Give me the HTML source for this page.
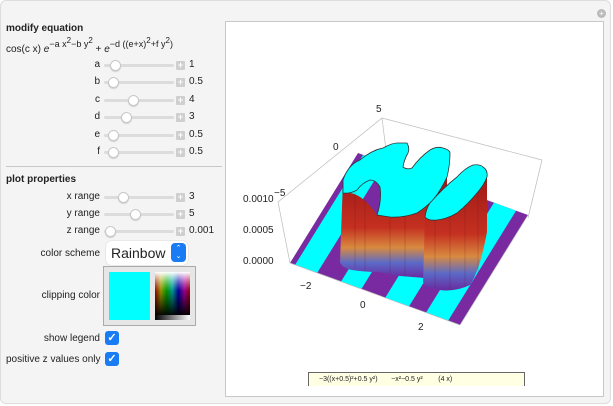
<!DOCTYPE html>
<html><head><meta charset="utf-8"><style>
*{margin:0;padding:0;box-sizing:border-box}
body{width:613px;height:406px;background:#fff;font-family:"Liberation Sans",sans-serif;font-size:10px;color:#222;position:relative;overflow:hidden}
.frame{position:absolute;left:0;top:0;width:611px;height:404px;background:#f4f4f4;border:1px solid #ddd;border-radius:6px}
.plot{position:absolute;left:225px;top:21px;width:379px;height:376px;background:#fff;border:1px solid #c8c8c8}
.t{position:absolute;white-space:nowrap}
.b{font-weight:bold}
.lab{position:absolute;text-align:right;width:100px;left:0;white-space:nowrap}
.track{position:absolute;left:104px;width:70px;height:3px;background:#dcdcdc;border-radius:2px}
.knob{position:absolute;width:11px;height:11px;border-radius:50%;background:#fff;border:1px solid #c8c8c8;box-shadow:0 1px 1px rgba(0,0,0,.15)}
.plus{position:absolute;left:176px;width:9px;height:9px;background:#cfcfcf;border-radius:1px;color:#fff;font-size:9px;line-height:9px;text-align:center;font-weight:bold}
.val{position:absolute;left:189px}
.cb{position:absolute;left:105px;width:14px;height:14px;background:#1a7cf5;border-radius:3px;color:#fff;font-size:11px;line-height:14px;text-align:center;font-weight:bold}
sup{font-size:9px;vertical-align:5px;line-height:0}
sup sup{font-size:8px;vertical-align:4px}
</style></head><body>
<div class="frame"></div>
<div style="position:absolute;left:597px;top:9px;width:9px;height:9px;border-radius:50%;background:#bbb;color:#fff;font-size:8px;line-height:9px;text-align:center">+</div>
<div class="plot"></div>

<div class="t b" style="left:6px;top:23px">modify equation</div>
<div class="t" style="left:6px;top:41px;font-size:10px">cos(c x) <i>e</i><sup>−a x<sup>2</sup>−b y<sup>2</sup></sup> + <i>e</i><sup>−d ((e+x)<sup>2</sup>+f y<sup>2</sup>)</sup></div>

<div class="lab" style="top:59px">a</div><div class="track" style="top:64px"></div><div class="knob" style="left:110px;top:60px"></div><div class="plus" style="top:61px">+</div><div class="val" style="top:59px">1</div>
<div class="lab" style="top:76px">b</div><div class="track" style="top:81px"></div><div class="knob" style="left:108px;top:77px"></div><div class="plus" style="top:78px">+</div><div class="val" style="top:76px">0.5</div>
<div class="lab" style="top:94px">c</div><div class="track" style="top:99px"></div><div class="knob" style="left:128px;top:95px"></div><div class="plus" style="top:96px">+</div><div class="val" style="top:94px">4</div>
<div class="lab" style="top:111px">d</div><div class="track" style="top:116px"></div><div class="knob" style="left:121px;top:112px"></div><div class="plus" style="top:113px">+</div><div class="val" style="top:111px">3</div>
<div class="lab" style="top:129px">e</div><div class="track" style="top:134px"></div><div class="knob" style="left:108px;top:130px"></div><div class="plus" style="top:131px">+</div><div class="val" style="top:129px">0.5</div>
<div class="lab" style="top:146px">f</div><div class="track" style="top:151px"></div><div class="knob" style="left:108px;top:147px"></div><div class="plus" style="top:148px">+</div><div class="val" style="top:146px">0.5</div>

<div style="position:absolute;left:6px;top:166px;width:216px;height:1px;background:#c8c8c8"></div>
<div class="t b" style="left:6px;top:174px">plot properties</div>

<div class="lab" style="top:191px">x range</div><div class="track" style="top:196px"></div><div class="knob" style="left:118px;top:192px"></div><div class="plus" style="top:193px">+</div><div class="val" style="top:191px">3</div>
<div class="lab" style="top:208px">y range</div><div class="track" style="top:213px"></div><div class="knob" style="left:130px;top:209px"></div><div class="plus" style="top:210px">+</div><div class="val" style="top:208px">5</div>
<div class="lab" style="top:225px">z range</div><div class="track" style="top:230px"></div><div class="knob" style="left:105px;top:226px"></div><div class="plus" style="top:227px">+</div><div class="val" style="top:225px">0.001</div>

<div class="lab" style="top:248px">color scheme</div>
<div style="position:absolute;left:106px;top:241px;width:82px;height:24px;background:#fff;border-radius:5px;box-shadow:0 0 1px rgba(0,0,0,.3)"></div>
<div class="t" style="left:111px;top:245px;font-size:14px">Rainbow</div>
<div style="position:absolute;left:171px;top:243px;width:15px;height:19px;background:#1a7cf5;border-radius:4px;color:#fff;font-size:7px;line-height:8px;text-align:center;padding-top:2px">⌃<br>⌄</div>

<div class="lab" style="top:290px">clipping color</div>
<div style="position:absolute;left:103px;top:266px;width:93px;height:60px;background:#e6e6e6;border:1px solid #aaa"></div>
<div style="position:absolute;left:109px;top:272px;width:41px;height:48px;background:#00ffff"></div>
<div style="position:absolute;left:155px;top:272px;width:35px;height:48px;background:linear-gradient(to bottom,rgba(0,0,0,0) 0%,rgba(0,0,0,1) 92%),linear-gradient(to bottom,rgba(255,255,255,1),rgba(255,255,255,0) 40%),linear-gradient(to right,#f00,#ff0,#0f0,#0ff,#00f,#f0f,#f00)"></div>
<div style="position:absolute;left:155px;top:315px;width:35px;height:5px;background:linear-gradient(to right,#000,#fff)"></div>

<div class="lab" style="top:333px">show legend</div><div class="cb" style="top:331px">✓</div>
<div class="t" style="left:6px;top:354px">positive z values only</div><div class="cb" style="top:352px">✓</div>

<svg style="position:absolute;left:0;top:0" width="613" height="406" font-family="Liberation Sans" font-size="10" fill="#222">
<defs>
<linearGradient id="g1" x1="0" y1="0" x2="0" y2="1"><stop offset="0" stop-color="#a01818"/><stop offset="0.5" stop-color="#c43020"/><stop offset="0.7" stop-color="#d88a40"/><stop offset="0.85" stop-color="#5a6ac8"/><stop offset="1" stop-color="#6a2aa0"/></linearGradient>
</defs>
<g stroke="#bbb" stroke-width="0.7" fill="none">
<polyline points="278,202 382,118 542,160"/>
<line x1="382" y1="118" x2="386" y2="150"/>
<line x1="542" y1="160" x2="528" y2="218"/>
</g>
<polygon points="290,263 460,325 528,215 358,153" fill="#7a2aa0"/>
<g fill="#00ffff">
<polygon points="295.1,264.9 317.2,272.9 385.2,162.9 363.1,154.9"/>
<polygon points="341,281.6 361.4,289 429.4,179 409,171.6"/>
<polygon points="385.2,297.7 409,306.4 477,196.4 453.2,187.7"/>
<polygon points="426,312.6 448.1,320.7 516.1,210.7 494,202.6"/>
</g>
<path d="M343,180 L343,193 Q360,190 377,215 L390,217 L417,213 L433,200 L447,177 L447,262 Q440,275 425,278 L400,276 L378,272 Q365,272 352,270 Q342,268 340,262 Z" fill="url(#g1)"/>
<path d="M425,217 L437,220 L457,213 L477,193 L487,177 L487,232 Q480,270 470,285 Q455,292 440,290 Q425,288 423,282 Z" fill="url(#g1)"/>
<g stroke="#5a1010" stroke-width="0.4" opacity="0.5">
<line x1="355" y1="192" x2="355" y2="268"/><line x1="365" y1="198" x2="365" y2="270"/><line x1="390" y1="217" x2="390" y2="274"/><line x1="405" y1="216" x2="405" y2="276"/><line x1="435" y1="219" x2="435" y2="288"/><line x1="450" y1="216" x2="450" y2="290"/><line x1="465" y1="206" x2="465" y2="287"/><line x1="478" y1="192" x2="478" y2="275"/>
</g>
<g fill="#00ffff" stroke="#333" stroke-width="0.8">
<path d="M343,180 Q348,165 360,160 Q372,150 383,148 Q392,143 397,143 L407,143 Q410,148 408,153 Q404,160 403,167 Q407,170 412,168 Q420,157 430,150 Q437,146 443,148 Q450,150 450,153 Q450,165 447,177 Q441,190 433,200 Q425,208 417,213 Q403,218 390,217 L377,215 Q382,200 380,187 Q376,180 370,180 Q362,183 357,190 Q350,194 343,193 Z"/>
<path d="M425,217 Q426,209 430,203 Q443,188 457,177 Q465,168 473,165 Q480,164 483,167 Q488,170 487,177 Q484,185 477,193 Q468,204 457,213 Q447,219 437,220 Q428,221 425,217 Z"/>
</g>
<g stroke="#bbb" stroke-width="0.7" fill="none">
<line x1="278" y1="202" x2="290" y2="263"/>
<line x1="290" y1="263" x2="460" y2="325"/>
<line x1="460" y1="325" x2="528" y2="215"/>
</g>
<text x="376" y="112">5</text>
<text x="333" y="150">0</text>
<text x="274" y="196">−5</text>
<text x="243" y="202">0.0010</text>
<text x="243" y="233">0.0005</text>
<text x="243" y="264">0.0000</text>
<text x="300" y="289">−2</text>
<text x="360" y="308">0</text>
<text x="418" y="330">2</text>
</svg>

<div style="position:absolute;left:308px;top:372px;width:217px;height:14px;background:#ffffe4;border:1px solid #666;border-bottom:none;overflow:hidden;font-size:7px;white-space:nowrap;padding:3px 0 0 10px">−3((x+0.5)²+0.5 y²) &nbsp;&nbsp;&nbsp;&nbsp;&nbsp;&nbsp;−x²−0.5 y² &nbsp;&nbsp;&nbsp;&nbsp;&nbsp;&nbsp;&nbsp;(4 x)</div>
<div style="position:absolute;left:226px;top:386px;width:377px;height:10px;background:#fff"></div>
</body></html>
